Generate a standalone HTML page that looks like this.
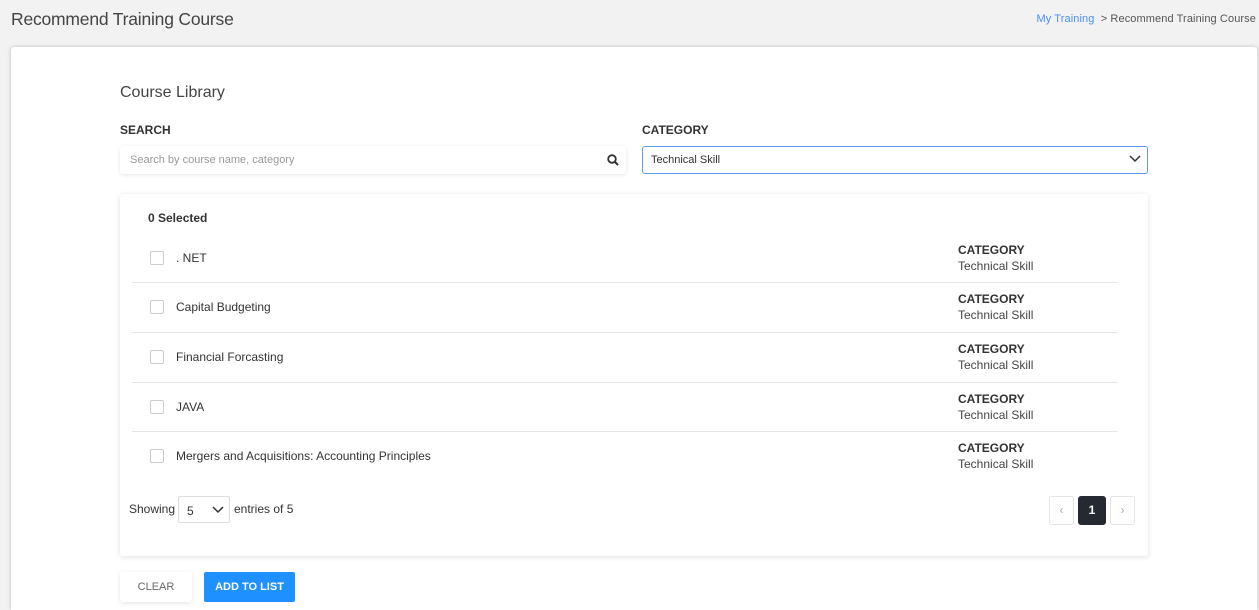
<!DOCTYPE html>
<html style="width:1259px;height:610px;overflow:hidden"><head><style>
*{box-sizing:border-box;margin:0;padding:0}
body{width:1259px;height:610px;overflow:hidden;background:#f2f2f2;font-family:"Liberation Sans",sans-serif;color:#333;position:relative}
.a{position:absolute}
.t{font-size:17.5px;color:#444;left:11px;top:9px;letter-spacing:-0.2px}
.bc{right:3px;top:13px;font-size:11px;color:#555;letter-spacing:0.1px}
.bc span{color:#4a8ff0}
.card{left:11px;top:47px;width:1246px;height:563px;background:#fff;border-radius:3px 3px 0 0;box-shadow:0 0 4px rgba(0,0,0,.2)}
.lbl{font-size:12px;font-weight:bold;color:#333}
.inp{height:28px;background:#fff;border-radius:3px;font-size:11px;padding-left:10px;line-height:28px}
.panel{left:120px;top:194px;width:1028px;height:362px;background:#fff;border-radius:3px;box-shadow:0 1px 6px rgba(0,0,0,.12)}
.cb{width:14px;height:14px;border:1px solid #ccc;border-radius:2px;left:150px}
.nm{left:176px;font-size:12px;color:#333}
.cl{left:958px;font-size:12px;font-weight:bold;color:#333}
.cv{left:958px;font-size:12px;color:#444}
.sep{left:132px;width:986px;height:1px;background:#e6e6e6}
.pg{width:25px;height:29px;border:1px solid #e5e5e5;border-radius:3px;top:496px;text-align:center;line-height:27px;font-size:12px;color:#aaa}
</style></head><body>
<div class="a t">Recommend Training Course</div>
<div class="a bc"><span>My Training</span>&nbsp; &gt; Recommend Training Course</div>
<div class="a card"></div>
<div class="a" style="left:120px;top:84px;font-size:16px;color:#444">Course Library</div>
<div class="a lbl" style="left:120px;top:123px">SEARCH</div>
<div class="a lbl" style="left:642px;top:123px">CATEGORY</div>
<div class="a inp" style="left:120px;top:146px;width:506px;color:#999;box-shadow:0 1px 4px rgba(0,0,0,.1)">Search by course name, category
<svg class="a" style="right:7px;top:8px" width="12" height="12" viewBox="0 0 12 12"><circle cx="5" cy="5" r="3.8" fill="none" stroke="#333" stroke-width="1.8"/><path d="M8 8l3 3" stroke="#333" stroke-width="2"/></svg></div>
<div class="a inp" style="left:642px;top:146px;width:506px;border:1px solid #5b9bf0;color:#333;line-height:26px;padding-left:8px">Technical Skill
<svg class="a" style="right:6px;top:8px" width="12" height="8" viewBox="0 0 12 8"><path d="M1 1l5 5 5-5" fill="none" stroke="#333" stroke-width="1.5"/></svg></div>
<div class="a panel"></div>
<div class="a lbl" style="left:148px;top:211px">0 Selected</div>

<div class="a cb" style="top:251px"></div><div class="a nm" style="top:251px">. NET</div>
<div class="a cl" style="top:243px">CATEGORY</div><div class="a cv" style="top:259px">Technical Skill</div>
<div class="a sep" style="top:282px"></div>
<div class="a cb" style="top:300px"></div><div class="a nm" style="top:300px">Capital Budgeting</div>
<div class="a cl" style="top:292px">CATEGORY</div><div class="a cv" style="top:308px">Technical Skill</div>
<div class="a sep" style="top:332px"></div>
<div class="a cb" style="top:350px"></div><div class="a nm" style="top:350px">Financial Forcasting</div>
<div class="a cl" style="top:342px">CATEGORY</div><div class="a cv" style="top:358px">Technical Skill</div>
<div class="a sep" style="top:382px"></div>
<div class="a cb" style="top:400px"></div><div class="a nm" style="top:400px">JAVA</div>
<div class="a cl" style="top:392px">CATEGORY</div><div class="a cv" style="top:408px">Technical Skill</div>
<div class="a sep" style="top:431px"></div>
<div class="a cb" style="top:449px"></div><div class="a nm" style="top:449px">Mergers and Acquisitions: Accounting Principles</div>
<div class="a cl" style="top:441px">CATEGORY</div><div class="a cv" style="top:457px">Technical Skill</div>

<div class="a" style="left:129px;top:502px;font-size:12px">Showing</div>
<div class="a" style="left:178px;top:496px;width:52px;height:27px;border:1px solid #ddd;border-radius:2px;font-size:12px;padding:7px 0 0 8px">5
<svg class="a" style="right:5px;top:9px" width="12" height="8" viewBox="0 0 12 8"><path d="M1 1l5 5 5-5" fill="none" stroke="#333" stroke-width="1.5"/></svg></div>
<div class="a" style="left:234px;top:502px;font-size:12px">entries of 5</div>
<div class="a pg" style="left:1049px">‹</div>
<div class="a pg" style="left:1078px;width:28px;background:#252a32;border-color:#252a32;color:#fff;font-weight:bold">1</div>
<div class="a pg" style="left:1110px">›</div>

<div class="a" style="left:120px;top:572px;width:72px;height:30px;background:#fff;border-radius:3px;box-shadow:0 1px 4px rgba(0,0,0,.12);font-size:11px;color:#666;text-align:center;line-height:30px">CLEAR</div>
<div class="a" style="left:204px;top:572px;width:91px;height:30px;background:#1e90ff;border-radius:2px;font-size:11px;font-weight:bold;color:#fff;text-align:center;line-height:30px">ADD TO LIST</div>
</body></html>
